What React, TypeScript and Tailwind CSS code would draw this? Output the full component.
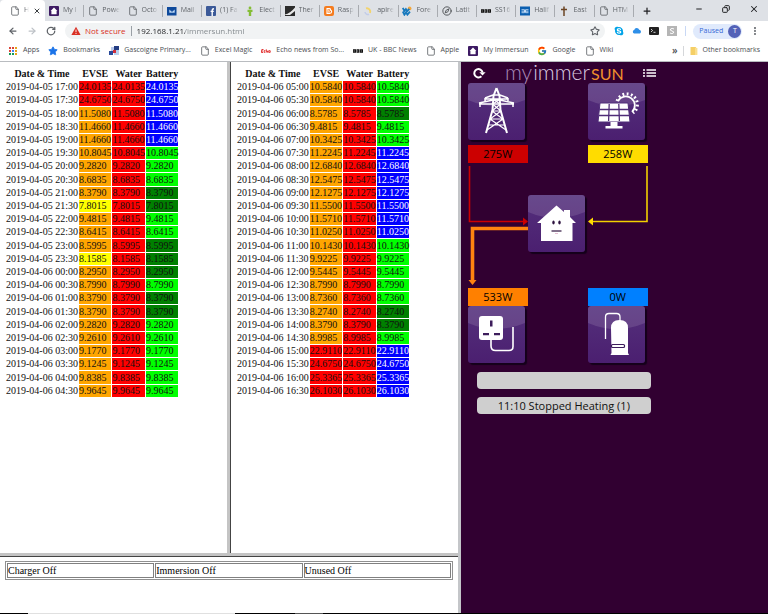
import type { ReactNode } from "react";
import clsx from "clsx";
import { ArrowLeft, ArrowRight, Compass, Copy, File, Minus, MoreVertical, Plus, RotateCw, Star, X } from "lucide-react";
import { FaSkype } from "react-icons/fa";
import { FcGoogle } from "react-icons/fc";

type Reading = [time: string, value: string];

const EARLY: Reading[] = [
  ["2019-04-05 17:00", "24.0135"],
  ["2019-04-05 17:30", "24.6750"],
  ["2019-04-05 18:00", "11.5080"],
  ["2019-04-05 18:30", "11.4660"],
  ["2019-04-05 19:00", "11.4660"],
  ["2019-04-05 19:30", "10.8045"],
  ["2019-04-05 20:00", "9.2820"],
  ["2019-04-05 20:30", "8.6835"],
  ["2019-04-05 21:00", "8.3790"],
  ["2019-04-05 21:30", "7.8015"],
  ["2019-04-05 22:00", "9.4815"],
  ["2019-04-05 22:30", "8.6415"],
  ["2019-04-05 23:00", "8.5995"],
  ["2019-04-05 23:30", "8.1585"],
  ["2019-04-06 00:00", "8.2950"],
  ["2019-04-06 00:30", "8.7990"],
  ["2019-04-06 01:00", "8.3790"],
  ["2019-04-06 01:30", "8.3790"],
  ["2019-04-06 02:00", "9.2820"],
  ["2019-04-06 02:30", "9.2610"],
  ["2019-04-06 03:00", "9.1770"],
  ["2019-04-06 03:30", "9.1245"],
  ["2019-04-06 04:00", "9.8385"],
  ["2019-04-06 04:30", "9.9645"],
];

const LATE: Reading[] = [
  ["2019-04-06 05:00", "10.5840"],
  ["2019-04-06 05:30", "10.5840"],
  ["2019-04-06 06:00", "8.5785"],
  ["2019-04-06 06:30", "9.4815"],
  ["2019-04-06 07:00", "10.3425"],
  ["2019-04-06 07:30", "11.2245"],
  ["2019-04-06 08:00", "12.6840"],
  ["2019-04-06 08:30", "12.5475"],
  ["2019-04-06 09:00", "12.1275"],
  ["2019-04-06 09:30", "11.5500"],
  ["2019-04-06 10:00", "11.5710"],
  ["2019-04-06 10:30", "11.0250"],
  ["2019-04-06 11:00", "10.1430"],
  ["2019-04-06 11:30", "9.9225"],
  ["2019-04-06 12:00", "9.5445"],
  ["2019-04-06 12:30", "8.7990"],
  ["2019-04-06 13:00", "8.7360"],
  ["2019-04-06 13:30", "8.2740"],
  ["2019-04-06 14:00", "8.3790"],
  ["2019-04-06 14:30", "8.9985"],
  ["2019-04-06 15:00", "22.9110"],
  ["2019-04-06 15:30", "24.6750"],
  ["2019-04-06 16:00", "25.3365"],
  ["2019-04-06 16:30", "26.1030"],
];

function evseColour(price: number) {
  if (price > 20) return "bg-[#ff0000]";
  if (price < 8.2) return "bg-[#ffff00]";
  return "bg-[#ffa500]";
}

function batteryColour(price: number) {
  if (price > 11) return "bg-[#0000ff] text-white";
  if (price < 8.6) return "bg-[#008000]";
  return "bg-[#00ff00]";
}

function PriceTable({ rows }: { rows: Reading[] }) {
  return (
    <table className="h-[331px] border-separate border-spacing-px text-[10px] leading-[12px] text-[#111]">
      <thead>
        <tr>
          <th className="px-px">Date &amp; Time</th>
          <th className="min-w-8">EVSE</th>
          <th className="min-w-8">Water</th>
          <th className="min-w-8">Battery</th>
        </tr>
      </thead>
      <tbody>
        {rows.map(([time, value]) => (
          <tr key={time}>
            <td className="whitespace-nowrap">{time}</td>
            <td className={evseColour(Number(value))}>{value}</td>
            <td className="bg-[#ff0000]">{value}</td>
            <td className={batteryColour(Number(value))}>{value}</td>
          </tr>
        ))}
      </tbody>
    </table>
  );
}

function DocIcon() {
  return <File className="h-[10px] w-[10px] shrink-0 text-[#5f6368]" strokeWidth={2} />;
}

function HouseBadge() {
  return (
    <svg viewBox="0 0 10 10" className="size-[10px] shrink-0">
      <rect width="10" height="10" rx="1" fill="#3d1a63" />
      <path d="M5 1.6 8.4 5H7.6V8.2H2.4V5H1.6Z" fill="#fff" />
    </svg>
  );
}

function BbcIcon() {
  return (
    <svg viewBox="0 0 10 10" className="size-[10px] shrink-0">
      <path d="M0 3.2h3v3.6H0zM3.5 3.2h3v3.6h-3zM7 3.2h3v3.6H7z" fill="#111" />
      <path d="M1.2 4.2v1.6M4.7 4.2v1.6M8.3 4.2v1.6" stroke="#aaa" strokeWidth=".6" />
    </svg>
  );
}

function MailIcon() {
  return (
    <svg viewBox="0 0 10 10" className="size-[10px] shrink-0">
      <rect y="1" width="9.5" height="8.5" fill="#0f4a9c" />
      <path d="M2 3h6v4H2zM2 3l3 2.5L8 3" fill="#bcd8f5" stroke="#0f4a9c" strokeWidth=".6" />
    </svg>
  );
}

function FacebookIcon() {
  return (
    <svg viewBox="0 0 10 10" className="size-[10px] shrink-0">
      <rect width="10" height="10" rx="1" fill="#3b5998" />
      <path d="M6.2 10V4.1Q6.2 2.7 8 2.7M4.6 5.4h3.2" stroke="#fff" strokeWidth="1.4" fill="none" />
    </svg>
  );
}

function PersonIcon() {
  return (
    <svg viewBox="0 0 10 10" className="size-[10px] shrink-0">
      <circle cx="5" cy="2" r="1.4" fill="#84bd35" />
      <path d="M2.5 3.7h5v2.2H6.2V10H3.8V5.9H2.5z" fill="#84bd35" />
    </svg>
  );
}

function SlashIcon() {
  return (
    <svg viewBox="0 0 10 10" className="size-[10px] shrink-0">
      <rect width="10" height="10" fill="#2b2b2b" />
      <path d="M0 8.5Q5 7.500 10 1.500V5L5 9H0z" fill="#e8e8e8" />
    </svg>
  );
}

function BloggerIcon() {
  return (
    <svg viewBox="0 0 10 10" className="size-[10px] shrink-0">
      <rect width="10" height="10" rx="2" fill="#f57c1f" />
      <path d="M3 2.6h2.3q1.5 0 1.5 1.8.8.1.8 1.4 0 1.6-1.8 1.6H3z" fill="none" stroke="#fff" strokeWidth="1.1" />
      <path d="M4 4.3h1.5M4 5.8h2" stroke="#fff" strokeWidth=".8" />
    </svg>
  );
}

function ApireIcon() {
  return (
    <svg viewBox="0 0 10 10" className="size-[10px] shrink-0">
      <path d="M3 2.4a3.4 3.4 0 0 1 4 4.6" fill="none" stroke="#f3d36b" strokeWidth="1.8" />
      <path d="M2 6a3 3 0 0 0 4 2.4" fill="none" stroke="#c2cce8" strokeWidth="1.5" />
    </svg>
  );
}

function ForecastIcon() {
  return (
    <svg viewBox="0 0 10 10" className="size-[10px] shrink-0">
      <circle cx="7.6" cy="2.4" r="1.9" fill="#f3a73c" />
      <path d="M.8 1.8 2.4 5l1.5-2 1.4 2 2-2.2M.8 5.5l1.6 3.2L4 6.4l1.4 2.3 2.6-3" fill="none" stroke="#1779bd" strokeWidth="1.8" />
    </svg>
  );
}

function HalifaxIcon() {
  return (
    <svg viewBox="0 0 10 10" className="size-[10px] shrink-0">
      <rect y=".5" width="10" height="9" fill="#0a5eb0" />
      <path d="M1.500 3.700h3v3h-3M8.500 3.700h-3v3h3M1.500 5.200h7" fill="none" stroke="#d9ecff" strokeWidth=".8" />
    </svg>
  );
}

function CrossIcon() {
  return (
    <svg viewBox="0 0 10 10" className="size-[10px] shrink-0">
      <path d="M5 .5v9.5M2 3.4h6" stroke="#6b4423" strokeWidth="1.5" />
    </svg>
  );
}

function SchoolIcon() {
  return (
    <svg viewBox="0 0 10 10" className="size-[10px] shrink-0">
      <path d="M2 1h4v4H2z" fill="#b8c8ea" />
      <path d="M5 0h5v4H5z" fill="#243d82" />
      <path d="M0 5h4v4H0z" fill="#284a9a" />
      <path d="M4 4h3v3H4z" fill="#d22f3a" />
      <path d="M7 4h3v5H5V7h2z" fill="#b9d1ee" />
    </svg>
  );
}

function EchoIcon() {
  return (
    <svg viewBox="0 0 10 10" className="size-[10px] shrink-0">
      <path d="M2.5 3.5H.8L.4 6.5h1.7M.7 5h1.4M4.4 4.6H3.2v1.8h1.1M5.3 3.3v3.2M5.3 5h1.2v1.6M7.7 4.7h1.5v1.7H7.7z" fill="none" stroke="#e02626" strokeWidth=".9" />
    </svg>
  );
}

function AppsIcon() {
  return (
    <svg viewBox="0 0 10 10" className="size-[10px] shrink-0">
      <path d="M1 1h2v2H1zM1 4h2v2H1zM4 1h2v2H4z" fill="#db4437" />
      <path d="M7 1h2v2H7zM7 4h2v2H7zM7 7h2v2H7z" fill="#e8a317" />
      <path d="M4 4h2v2H4z" fill="#4285f4" />
      <path d="M1 7h2v2H1zM4 7h2v2H4z" fill="#0f9d58" />
    </svg>
  );
}

function FolderIcon() {
  return (
    <svg viewBox="0 0 10 10" className="size-[10px] shrink-0">
      <path d="M1.5 1h5l1 1v7h-6z" fill="#f5cf66" />
      <path d="M6 2h2.4v7H6z" fill="#fadf8e" />
    </svg>
  );
}

const TABS: { title: string; icon: ReactNode }[] = [
  { title: "My I", icon: <HouseBadge /> },
  { title: "Powe", icon: <DocIcon /> },
  { title: "Octo", icon: <DocIcon /> },
  { title: "Mail", icon: <MailIcon /> },
  { title: "(1) Fa", icon: <FacebookIcon /> },
  { title: "Elect", icon: <PersonIcon /> },
  { title: "Ther", icon: <SlashIcon /> },
  { title: "Rasp", icon: <BloggerIcon /> },
  { title: "apire", icon: <ApireIcon /> },
  { title: "Fore", icon: <ForecastIcon /> },
  { title: "Latit", icon: <Compass className="size-[10px] shrink-0 text-[#3c4043]" /> },
  { title: "SS16", icon: <BbcIcon /> },
  { title: "Halif", icon: <HalifaxIcon /> },
  { title: "East", icon: <CrossIcon /> },
  { title: "HTM", icon: <DocIcon /> },
];

const BOOKMARKS: { title: string; icon: ReactNode }[] = [
  { title: "Apps", icon: <AppsIcon /> },
  { title: "Bookmarks", icon: <Star className="size-[10px] shrink-0 fill-[#1a73e8] text-[#1a73e8]" /> },
  { title: "Gascoigne Primary...", icon: <SchoolIcon /> },
  { title: "Excel Magic", icon: <DocIcon /> },
  { title: "Echo news from So...", icon: <EchoIcon /> },
  { title: "UK - BBC News", icon: <BbcIcon /> },
  { title: "Apple", icon: <DocIcon /> },
  { title: "My Immersun", icon: <HouseBadge /> },
  { title: "Google", icon: <FcGoogle className="size-[10px] shrink-0" /> },
  { title: "Wiki", icon: <DocIcon /> },
];

function TabStrip() {
  return (
    <div className="flex h-[21px] items-stretch bg-[#dee1e6] text-[#5f6368]">
      <button className="flex w-[45px] items-center gap-1 rounded-t bg-white pl-[10px]">
        <DocIcon />
        <span className="mask-r-from-20%">H</span>
        <X className="size-[8px] shrink-0 text-[#3c4043]" strokeWidth={3} />
      </button>
      <div className="grid flex-1 grid-cols-15">
        {TABS.map((tab) => (
          <button key={tab.title} className="flex min-w-0 items-center gap-1 pl-1">
            {tab.icon}
            <span className="flex-1 text-left whitespace-nowrap mask-r-from-60%">{tab.title}</span>
            <span className="h-[12px] w-px bg-[#a8abb0]" />
          </button>
        ))}
      </div>
      <div className="flex w-[134px] items-center justify-between pr-[9px] pl-2 text-[#202124]">
        <button aria-label="New tab">
          <Plus className="size-[10px]" strokeWidth={3} />
        </button>
        <div className="flex items-center gap-[19px] pb-1">
          <button aria-label="Minimise">
            <Minus className="size-[8px]" strokeWidth={3} />
          </button>
          <button aria-label="Restore">
            <Copy className="size-[8px] -scale-x-100" strokeWidth={3} />
          </button>
          <button aria-label="Close">
            <X className="size-[10px]" strokeWidth={2.5} />
          </button>
        </div>
      </div>
    </div>
  );
}

function Toolbar() {
  return (
    <div className="flex h-5 items-center text-[#5f6368]">
      <div className="flex w-[65px] items-center gap-[9px] pl-2">
        <button aria-label="Back">
          <ArrowLeft className="size-[10px]" strokeWidth={3} />
        </button>
        <button aria-label="Forward">
          <ArrowRight className="size-[10px] text-[#bdc1c6]" strokeWidth={3} />
        </button>
        <button aria-label="Reload">
          <RotateCw className="size-[10px]" strokeWidth={3} />
        </button>
      </div>
      <div className="flex h-4 flex-1 items-center rounded-full bg-[#f1f3f4] pr-[5px] pl-[6px] text-[8px]">
        <svg viewBox="0 0 10 10" className="size-[10px]">
          <path d="M5 .8 9.6 9H.4z" fill="#d93025" />
          <path d="M5 3.6v2.6M5 7v1" stroke="#fff" strokeWidth=".9" />
        </svg>
        <span className="ml-1 text-[#d93025]">Not secure</span>
        <span className="mx-[5px] h-[10px] w-px bg-[#9aa0a6]" />
        <input
          aria-label="Address"
          defaultValue="192.168.1.21/immersun.html"
          className="min-w-0 flex-1 bg-linear-to-r from-[#202124] from-[48px] to-[#80868b] to-[48px] bg-clip-text text-transparent outline-none"
        />
        <button aria-label="Bookmark this page">
          <Star className="size-[10px]" strokeWidth={2.5} />
        </button>
      </div>
      <div className="flex w-[163px] items-center justify-between pr-2 pl-[9px]">
        <FaSkype className="size-[10px] text-[#00a3e8]" />
        <svg viewBox="0 0 10 10" className="size-[10px]">
          <path d="M2.2 7.5a1.8 1.8 0 0 1 0-3.5 2.6 2.6 0 0 1 5-.2A2 2 0 0 1 8 7.5z" fill="#2e8fe8" />
        </svg>
        <svg viewBox="0 0 10 10" className="size-[10px]">
          <rect y="1" width="10" height="8" rx="1" fill="#222" />
          <path d="m2 3 1.6 1.5L2 6M4.5 6.3h2" fill="none" stroke="#fff" strokeWidth=".8" />
        </svg>
        <svg viewBox="0 0 10 10" className="size-[10px]">
          <rect width="10" height="10" fill="#b5b5b5" />
          <path d="M7 3Q5 1.8 3.6 3T5 5t1.4 2T3 7" fill="none" stroke="#fff" strokeWidth="1" />
        </svg>
        <span className="h-[10px] w-px bg-[#c8d8f5]" />
        <button className="flex h-[15px] items-center gap-[5px] rounded-full bg-[#e0eafc] pr-px pl-[6px] text-[#3367d6]">
          Paused
          <span className="flex size-[13px] items-center justify-center rounded-full bg-[#5362b8] text-white">T</span>
        </button>
        <button aria-label="Menu">
          <MoreVertical className="size-[10px]" strokeWidth={3} />
        </button>
      </div>
    </div>
  );
}

function BookmarkBar() {
  return (
    <nav className="flex h-[21px] items-center border-b border-[#b9bcc0] px-2 pb-px text-[#4a4d51]">
      <div className="flex flex-1 items-center gap-[9px]">
        {BOOKMARKS.map((mark) => (
          <a key={mark.title} href="#" className="flex items-center gap-[5px] whitespace-nowrap">
            {mark.icon}
            {mark.title}
          </a>
        ))}
      </div>
      <button aria-label="More bookmarks" className="text-[10px] font-semibold">»</button>
      <span className="mx-[5px] h-[10px] w-px bg-[#d5d7da]" />
      <a href="#" className="flex items-center gap-1 whitespace-nowrap">
        <FolderIcon />
        Other bookmarks
      </a>
    </nav>
  );
}

function Tile({ label, children }: { label: string; children: ReactNode }) {
  return (
    <button
      aria-label={label}
      className="block size-[57px] rounded-[3px] bg-linear-to-b from-[#54307c] to-[#4b1f70] shadow-[2px_2px_1px_#14001a]"
    >
      <svg viewBox="0 0 57 57" className="size-full">
        <path d="M0 3Q0 0 3 0H54Q57 0 57 3V17Q28 29 0 17Z" fill="#fff" opacity=".12" />
        {children}
      </svg>
    </button>
  );
}

function Power({ value, className }: { value: string; className: string }) {
  return (
    <div className={clsx("h-[18px] w-[60px] text-center leading-[18px] font-medium text-black", className)}>{value}</div>
  );
}

function ImmersunPanel() {
  return (
    <section className="bg-[#310031] pl-[7px] font-['Open_Sans',sans-serif] text-[11px]">
      <header className="flex h-[21px] w-[188px] items-center justify-between pl-1 text-white">
        <button aria-label="Refresh">
          <svg viewBox="0 0 14 12" className="h-[12px] w-[14px]">
            <path d="M9.4 9.300A4.200 4.200 0 1 1 10.600 5.400" fill="none" stroke="#fff" strokeWidth="2" />
            <path d="M7.400 5.200h6.200L10.500 8.600z" fill="#fff" />
          </svg>
        </button>
        <h1 className="flex items-baseline gap-px font-[Lato,sans-serif] text-[21px] leading-[20px] font-light whitespace-nowrap text-[#d9cbe0]">
          <span className="text-[#a98bb8]">my</span>
          <span>immer</span>
          <span className="text-[16px] font-normal text-[#f0902c]">SUN</span>
        </h1>
        <button aria-label="Menu">
          <svg viewBox="0 0 13 8" className="h-2 w-[13px]">
            <path d="M0 1h2M0 4h2M0 7h2M3.500 1H13M3.500 4H13M3.500 7H13" stroke="#fff" strokeWidth="1.600" />
          </svg>
        </button>
      </header>
      <div className="w-[180px]">
        <div className="flex justify-between">
          <div className="flex flex-col gap-[5px]">
            <Tile label="Grid">
              <g fill="none" stroke="#fff" strokeWidth="1.5">
                <path d="M28.5 5 25.5 13 24.5 27 18 50M28.5 5 31.5 13 32.5 27 39 50" strokeWidth="2" />
                <path d="M17 15 25 12H32L40 15M17 16H40M11 20 25 17H32L46 20M11 21H46M12 20v4M45 20v4M17 15v3M40 15v3" />
                <path d="M25 16 32 21M32 16 25 21M24.5 21 33 28M32.5 21 24 28M24 28H33M24 28 35 36M33 28 22 36M22 36H35M22 36 38 47M35 36 19 47M20 42H37" strokeWidth="1.2" />
              </g>
            </Tile>
            <Power value="275W" className="bg-[#cc0000]" />
          </div>
          <div className="flex flex-col gap-[5px]">
            <Tile label="Solar">
              <path d="M30 18A9 9 0 1 1 44 29" fill="none" stroke="#fff" strokeWidth="1.8" />
              <path d="M29 18A10.5 10.5 0 1 1 45 30" fill="none" stroke="#fff" strokeWidth="3" strokeDasharray="1.8 2.4" />
              <path d="M12 20H40L42 39H10Z" fill="#fff" stroke="#4f2c78" strokeWidth="1" />
              <path d="M21.2 21 20.6 38M30.8 21 31.4 38M11.5 26.5H41M11 32.5H41.5" stroke="#4f2c78" strokeWidth="1.3" />
              <path d="M22.5 39h7v4h5v2.6h-17V43h5z" fill="#fff" />
            </Tile>
            <Power value="258W" className="bg-[#ffdc00]" />
          </div>
        </div>
        <div className="grid h-[125px] grid-cols-3">
          <svg viewBox="0 0 60 125" className="h-[125px] w-[60px]">
            <path d="M1.5 3V58.5H56" fill="none" stroke="#cc0000" strokeWidth="1.6" />
            <path d="M55 54.500 60 58.500 55 62.500z" fill="#cc0000" />
            <path d="M60 65.5H4.5V118" fill="none" stroke="#ff8410" strokeWidth="3.6" />
            <path d="M.5 117H8.5L4.5 122z" fill="#ff8410" />
          </svg>
          <div className="pt-8">
            <Tile label="Home">
              <path d="M28.5 10.5 36 17V15H42V22L48 28H44.500V46H13V28H9Z" fill="#fff" />
              <ellipse cx="25.500" cy="27.500" rx="1.200" ry="2" fill="#2d123f" />
              <ellipse cx="31.500" cy="27.500" rx="1.200" ry="2" fill="#2d123f" />
              <path d="M23.5 36H33.5" stroke="#2d123f" strokeWidth="1.2" />
              <path d="M27 38.500H30" stroke="#e0b0c8" strokeWidth=".8" />
            </Tile>
          </div>
          <svg viewBox="0 0 60 125" className="h-[125px] w-[60px]">
            <path d="M59 3V58.5H4" fill="none" stroke="#f2d000" strokeWidth="1.6" />
            <path d="M5 54.500 0 58.500 5 62.500z" fill="#ffdc00" />
          </svg>
        </div>
        <div className="flex justify-between">
          <div>
            <Power value="533W" className="bg-[#ff8000]" />
            <Tile label="Charger">
              <rect x="11" y="10" width="24" height="24" rx="3" fill="#fff" />
              <path d="M22 14.500h2.500v6H22zM15 27h6v2.300h-6zM26 27h6v2.300h-6z" fill="#3d1d5c" />
              <path d="M23 34V40Q23 44.500 27.500 44.500H41Q45 44.500 45 40.500V21" fill="none" stroke="#fff" strokeWidth="1.6" />
            </Tile>
          </div>
          <div>
            <Power value="0W" className="bg-[#0080ff]" />
            <Tile label="Immersion">
              <path d="M17.500 33V11Q17.500 7.500 21 7.500H28.500Q32 7.500 32 11V15" fill="none" stroke="#fff" strokeWidth="1.3" />
              <path d="M23 22Q23 14 31.500 14T40 22V47L41 49H22.500L23.500 47Z" fill="#fff" />
              <rect x="23.500" y="38.500" width="13" height="3" rx="1" fill="#fff" stroke="#3d1d5c" strokeWidth="1.200" />
            </Tile>
          </div>
        </div>
      </div>
      <div className="ml-[9px] flex w-[174px] flex-col gap-2 pt-[9px] text-center leading-[17px] text-[#111]">
        <p className="h-[17px] rounded bg-[#cfcfcf]" />
        <p className="h-[17px] rounded bg-[#cfcfcf]">11:10 Stopped Heating (1)</p>
      </div>
    </section>
  );
}

function RelayTable() {
  return (
    <table className="w-full border-separate border-spacing-px border border-[#909090] text-[10px] leading-[12px] text-black">
      <tbody>
        <tr>
          {["Charger Off", "Immersion Off", "Unused Off"].map((state) => (
            <td key={state} className="w-1/3 border border-[#808080] pt-px">
              {state}
            </td>
          ))}
        </tr>
      </tbody>
    </table>
  );
}

export default function App() {
  return (
    <div className="flex min-h-screen flex-col bg-white font-['Open_Sans',sans-serif] text-[7px]">
      <TabStrip />
      <Toolbar />
      <BookmarkBar />
      <main className="grid flex-1 grid-cols-[3fr_2fr]">
        <div className="flex flex-col border-r-3 border-[#c4c6c9] font-['Liberation_Serif',serif]">
          <div className="grid flex-1 grid-cols-[230fr_228fr]">
            <div className="border-r-3 border-[#c4c4c4] pt-[5px] pl-[5px]">
              <PriceTable rows={EARLY} />
            </div>
            <div className="border-l border-[#444] pt-[5px] pl-[5px]">
              <PriceTable rows={LATE} />
            </div>
          </div>
          <div className="border-t-3 border-[#c4c4c4]">
            <div className="border-t border-[#444] px-[5px] pt-1 pb-[33px]">
              <RelayTable />
            </div>
          </div>
        </div>
        <ImmersunPanel />
      </main>
      <footer className="flex h-px bg-black">
        <div className="ml-7 w-[207px] bg-[#e0e0e0]" />
        <div className="ml-[60px] w-7 bg-[#555]" />
      </footer>
    </div>
  );
}
